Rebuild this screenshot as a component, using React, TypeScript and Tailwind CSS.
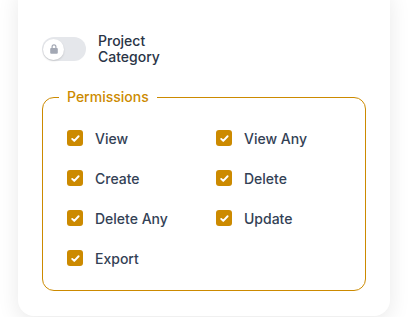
import React from "react";

const Check = () => (
  <span className="flex h-4 w-4 shrink-0 items-center justify-center rounded-[3px] bg-[#cc8a00]">
    <svg viewBox="0 0 16 16" className="h-[11px] w-[11px]" fill="none" stroke="white" strokeWidth="2.8" strokeLinecap="round" strokeLinejoin="round">
      <path d="M3.2 8.6l3 2.9 6.3-6.8" />
    </svg>
  </span>
);

const items = ["View", "View Any", "Create", "Delete", "Delete Any", "Update", "Export"];

export default function App() {
  return (
    <div className="min-h-[333px] bg-white" style={{ fontFamily: "Inter, 'Noto Sans', sans-serif" }}>
      <div className="-mt-4 ml-[18px] w-[372px] rounded-2xl bg-white px-6 pb-[25px] pt-[49px] shadow-[0_6px_22px_rgba(0,0,0,0.09)]">
        <div className="flex items-center gap-3">
          <div className="flex h-6 w-11 items-center rounded-full bg-[#e5e7eb] px-[1px]">
            <span className="flex h-[21px] w-[21px] items-center justify-center rounded-full bg-white shadow-[0_1px_2px_rgba(0,0,0,0.15)]">
              <svg viewBox="0 0 12 12" className="h-[12px] w-[12px]" fill="#a3a8b4">
                <path d="M3.5 5V3.8a2.5 2.5 0 015 0V5h-1.2V3.8a1.3 1.3 0 00-2.6 0V5z" />
                <rect x="2.2" y="5" width="7.6" height="5.8" rx="1" />
              </svg>
            </span>
          </div>
          <div className="text-[14px] font-medium leading-[16px] text-[#2a3446]">
            <div>Project</div>
            <div>Category</div>
          </div>
        </div>
        <fieldset className="mt-[22px] rounded-xl border border-[#cc8a00] px-6 pb-[22px] pt-[21px]">
          <legend className="-ml-2 px-2 text-[14px] font-medium leading-5 text-[#cc8a00]">Permissions</legend>
          <div className="grid grid-cols-[149px_1fr] gap-y-5">
            {items.map((t) => (
              <div key={t} className="flex h-5 items-center gap-3">
                <Check />
                <span className="text-[14px] font-medium text-[#334155]">{t}</span>
              </div>
            ))}
          </div>
        </fieldset>
      </div>
    </div>
  );
}
